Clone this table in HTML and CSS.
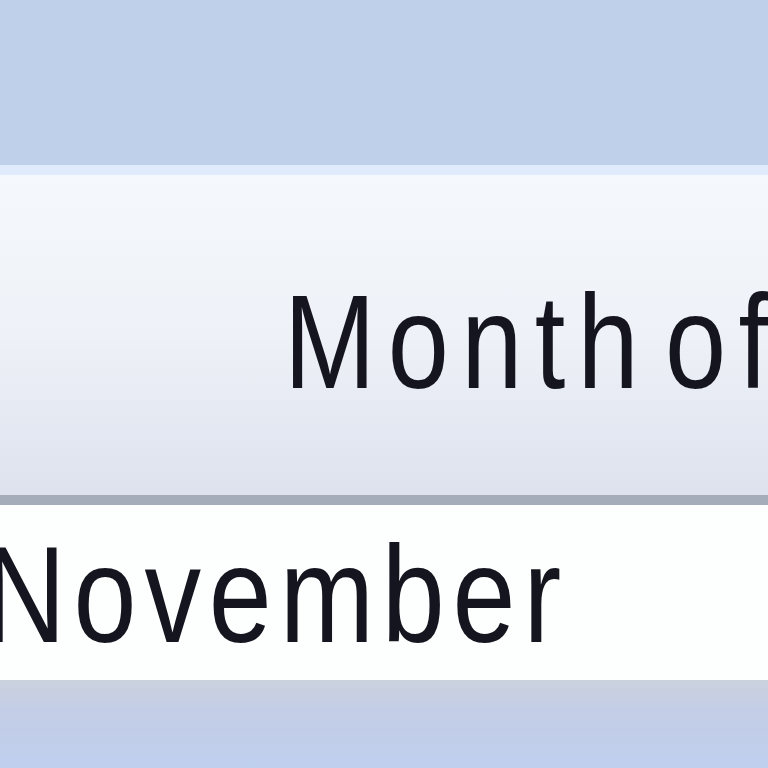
FILE: index.html
```html
<!DOCTYPE html>
<html>
<head>
<meta charset="utf-8">
<link rel="stylesheet" href="styles.css">
</head>
<body>
<div class="grid">
  <div class="top-band"></div>
  <div class="header-cell"><span class="header-text">Month of</span></div>
  <div class="data-row"><span class="data-text">November</span></div>
  <div class="bottom-band"></div>
</div>
</body>
</html>
```
FILE: styles.css
```css
html, body {
  margin: 0;
  padding: 0;
  width: 768px;
  height: 768px;
  overflow: hidden;
  background: #bfcfec;
}
.grid {
  display: flex;
  flex-direction: column;
  width: 768px;
  height: 768px;
  font-family: "Liberation Sans", sans-serif;
  color: #15151f;
}
.top-band {
  height: 165px;
  flex: none;
  background: #bfd0ea;
}
.header-cell {
  flex: none;
  box-sizing: border-box;
  height: 340px;
  border-top: 10px solid #e0ebfb;
  border-bottom: 10px solid #a5adbb;
  background: linear-gradient(#f5f9fd 0%, #eef1f7 50%, #dde2ee 100%);
  padding-left: 284px;
  padding-top: 100px;
  white-space: nowrap;
  overflow: hidden;
}
.header-text {
  display: inline-block;
  font-size: 134px;
  line-height: 134px;
  letter-spacing: 15px;
  word-spacing: -35px;
  transform: scaleX(0.82);
  transform-origin: 0 0;
}
.data-row {
  flex: none;
  box-sizing: border-box;
  height: 175px;
  padding-top: 20px;
  background: #fcfffe;
  white-space: nowrap;
  overflow: hidden;
}
.data-text {
  display: inline-block;
  margin-left: -16px;
  font-size: 138px;
  line-height: 138px;
  letter-spacing: 9.6px;
  transform: scaleX(0.82);
  transform-origin: 0 0;
}
.bottom-band {
  flex: 1;
  background: linear-gradient(#cbd2de 0px, #c3cde6 30px, #bfcfee 88px);
}
```
